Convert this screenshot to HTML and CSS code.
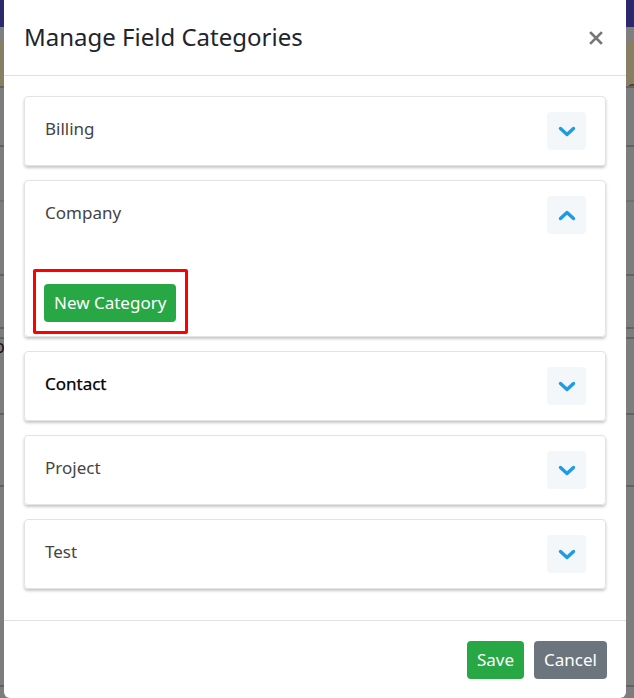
FILE: index.html
```html
<!DOCTYPE html>
<html lang="en">
<head>
    <meta charset="UTF-8">
    <meta name="viewport" content="width=device-width, initial-scale=1.0">
    <title>Manage Field Categories</title>
    <link rel="stylesheet" href="styles.css">
</head>
<body>
    <div class="backdrop">
        <div class="bg-top"></div>
        <div class="bg-gap"></div>
        <div class="bg-band"><span class="bg-right">e</span></div>
        <div class="bg-row" style="height: 59px"></div>
        <div class="bg-row" style="height: 55px"></div>
        <div class="bg-row light" style="height: 74px"></div>
        <div class="bg-row" style="height: 53px"></div>
        <div class="bg-row" style="height: 10px"></div>
        <div class="bg-row" style="height: 76px"><span class="bg-o">o</span></div>
        <div class="bg-row" style="height: 72px"></div>
        <div class="bg-row" style="height: 200px"></div>
        <div class="bg-row" style="height: 20px"></div>
    </div>

    <div class="modal">
        <div class="modal-header">
            <h4 class="modal-title">Manage Field Categories</h4>
            <button type="button" class="close" aria-label="Close">
                <svg width="14" height="14" viewBox="0 0 14 14">
                    <path d="M2 2 L12 12 M12 2 L2 12" stroke="#777" stroke-width="2.6" stroke-linecap="square"/>
                </svg>
            </button>
        </div>

        <div class="modal-body">
            <div class="category">
                <div class="category-head">
                    <span class="category-name">Billing</span>
                    <button type="button" class="toggle">
                        <svg width="18" height="11" viewBox="0 0 18 11"><polyline points="2.5,2.5 9,8.5 15.5,2.5" fill="none" stroke="#1f9be6" stroke-width="3.4" stroke-linecap="round" stroke-linejoin="round"/></svg>
                    </button>
                </div>
            </div>

            <div class="category">
                <div class="category-head">
                    <span class="category-name">Company</span>
                    <button type="button" class="toggle">
                        <svg width="18" height="11" viewBox="0 0 18 11"><polyline points="2.5,8.5 9,2.5 15.5,8.5" fill="none" stroke="#1f9be6" stroke-width="3.4" stroke-linecap="round" stroke-linejoin="round"/></svg>
                    </button>
                </div>
                <div class="category-body">
                    <div class="highlight">
                        <button type="button" class="btn btn-success">New Category</button>
                    </div>
                </div>
            </div>

            <div class="category">
                <div class="category-head">
                    <span class="category-name strong">Contact</span>
                    <button type="button" class="toggle">
                        <svg width="18" height="11" viewBox="0 0 18 11"><polyline points="2.5,2.5 9,8.5 15.5,2.5" fill="none" stroke="#1f9be6" stroke-width="3.4" stroke-linecap="round" stroke-linejoin="round"/></svg>
                    </button>
                </div>
            </div>

            <div class="category">
                <div class="category-head">
                    <span class="category-name">Project</span>
                    <button type="button" class="toggle">
                        <svg width="18" height="11" viewBox="0 0 18 11"><polyline points="2.5,2.5 9,8.5 15.5,2.5" fill="none" stroke="#1f9be6" stroke-width="3.4" stroke-linecap="round" stroke-linejoin="round"/></svg>
                    </button>
                </div>
            </div>

            <div class="category">
                <div class="category-head">
                    <span class="category-name">Test</span>
                    <button type="button" class="toggle">
                        <svg width="18" height="11" viewBox="0 0 18 11"><polyline points="2.5,2.5 9,8.5 15.5,2.5" fill="none" stroke="#1f9be6" stroke-width="3.4" stroke-linecap="round" stroke-linejoin="round"/></svg>
                    </button>
                </div>
            </div>
        </div>

        <div class="modal-footer">
            <button type="button" class="btn btn-success">Save</button>
            <button type="button" class="btn btn-secondary">Cancel</button>
        </div>
    </div>
</body>
</html>
```

FILE: styles.css
```css
body {
    margin: 0;
    font-family: "Noto Sans", "Open Sans", sans-serif;
    background-color: #7d7d7d;
    overflow: hidden;
}

/* page behind the dialog */
.backdrop {
    display: flex;
    flex-direction: column;
}
.bg-top {
    height: 27px;
    background-color: #2c286c;
}
.bg-gap {
    height: 15px;
    background-color: #7f7f7f;
}
.bg-band {
    height: 44px;
    background-color: #867f63;
    position: relative;
}
.bg-right {
    position: absolute;
    left: 627px;
    top: 36px;
    font-size: 18px;
    color: #3a3520;
    line-height: 1;
}
.bg-row {
    box-sizing: border-box;
    flex-shrink: 0;
    background-color: #7d7d7d;
    border-top: 2px solid #626262;
    position: relative;
}
.bg-row.light {
    border-top-color: #707070;
}
.bg-o {
    position: absolute;
    left: -6px;
    top: -2px;
    font-size: 18px;
    color: #111;
    line-height: 1;
}

/* dialog */
.modal {
    position: absolute;
    top: 0;
    left: 4px;
    width: 622px;
    height: 698px;
    background-color: #fff;
    border-radius: 0 0 6px 6px;
    display: flex;
    flex-direction: column;
}
.modal-header {
    height: 76px;
    box-sizing: border-box;
    border-bottom: 1px solid #dee2e6;
    display: flex;
    align-items: center;
    justify-content: space-between;
    padding: 0 20px 0 20px;
}
.modal-title {
    margin: 0;
    font-size: 24px;
    font-weight: 400;
    color: #212529;
    padding-bottom: 3px;
}
.close {
    border: none;
    background: none;
    padding: 0;
    margin-right: 3px;
    display: flex;
    cursor: pointer;
}

.modal-body {
    padding: 20px 20px 17px 20px;
}
.category {
    border: 1px solid #e3e3e3;
    border-radius: 4px;
    box-shadow: 0 2px 3px rgba(0, 0, 0, 0.22);
    margin-bottom: 14px;
}
.category-head {
    display: flex;
    align-items: center;
    justify-content: space-between;
    padding: 15px 19px 15px 20px;
}
.category-name {
    font-size: 17px;
    color: #444;
    padding-bottom: 5px;
}
.category-name.strong {
    color: #000;
    -webkit-text-stroke: 0.25px #000;
}
.toggle {
    width: 39px;
    height: 38px;
    border: none;
    border-radius: 4px;
    background-color: #f4f7fa;
    display: flex;
    align-items: center;
    justify-content: center;
    padding: 0;
    cursor: pointer;
}
.category-body {
    padding: 20px 20px 2px 8px;
}
.highlight {
    display: inline-block;
    border: 3px solid #f00;
    border-radius: 2px;
    padding: 12px 9px 9px 8px;
}

.btn {
    font-family: inherit;
    font-size: 17px;
    height: 38px;
    border: none;
    border-radius: 4px;
    color: #fff;
    padding: 0 10px 2px 10px;
    cursor: pointer;
}
.btn-success {
    background-color: #28a745;
}
.btn-secondary {
    background-color: #6c757d;
}

.modal-footer {
    border-top: 1px solid #dee2e6;
    display: flex;
    justify-content: flex-end;
    gap: 10px;
    padding: 20px 19px 0 0;
}
```
